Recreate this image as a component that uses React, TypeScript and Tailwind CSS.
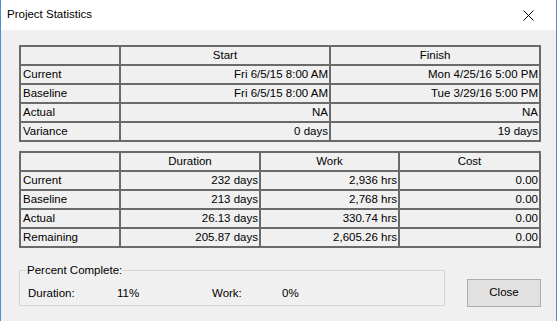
import React from 'react';

type Row = { label: string; values: string[] };

const startFinish: Row[] = [
    { label: 'Current', values: ['Fri 6/5/15 8:00 AM', 'Mon 4/25/16 5:00 PM'] },
    { label: 'Baseline', values: ['Fri 6/5/15 8:00 AM', 'Tue 3/29/16 5:00 PM'] },
    { label: 'Actual', values: ['NA', 'NA'] },
    { label: 'Variance', values: ['0 days', '19 days'] },
];

const totals: Row[] = [
    { label: 'Current', values: ['232 days', '2,936 hrs', '0.00'] },
    { label: 'Baseline', values: ['213 days', '2,768 hrs', '0.00'] },
    { label: 'Actual', values: ['26.13 days', '330.74 hrs', '0.00'] },
    { label: 'Remaining', values: ['205.87 days', '2,605.26 hrs', '0.00'] },
];

const cell = 'bg-[#f0f0f0] h-[17px] leading-[17px] whitespace-nowrap overflow-hidden';

const StatGrid: React.FC<{ headers: string[]; rows: Row[]; colsClass: string }> = ({ headers, rows, colsClass }) => (
    <div className={`grid ${colsClass} gap-[2px] p-[2px] bg-[#6a6a6a] w-[522px]`}>
        <div className={cell}></div>
        {headers.map(h => <div key={h} className={`${cell} text-center`}>{h}</div>)}
        {rows.map(r => (
            <React.Fragment key={r.label}>
                <div className={`${cell} pl-[2px]`}>{r.label}</div>
                {r.values.map((v, i) => <div key={i} className={`${cell} text-right pr-[1px]`}>{v}</div>)}
            </React.Fragment>
        ))}
    </div>
);

export default function App() {
    return (
        <div className="w-[560px] h-[321px] bg-white overflow-hidden text-black" style={{ fontFamily: '"Liberation Sans", Arial, sans-serif' }}>
            <div className="w-[557px] h-[321px] border-l border-r border-[#4a8fd4] flex flex-col">
                <div className="h-[30px] bg-white flex items-center justify-between pl-[6px] pr-[22px] shrink-0">
                    <span className="text-[11.5px]">Project Statistics</span>
                    <svg width="11" height="11" viewBox="0 0 11 11">
                        <path d="M0.5 0.5 L10.5 10.5 M10.5 0.5 L0.5 10.5" stroke="#000" strokeWidth="1" />
                    </svg>
                </div>
                <div className="flex-1 bg-[#f0f0f0] pl-[18px] pt-[15px] text-[11.5px]">
                    <StatGrid headers={['Start', 'Finish']} rows={startFinish} colsClass="grid-cols-[98px_208px_208px]" />
                    <div className="mt-[9px]">
                        <StatGrid headers={['Duration', 'Work', 'Cost']} rows={totals} colsClass="grid-cols-[98px_138px_137px_139px]" />
                    </div>
                    <div className="flex items-start">
                        <div className="relative mt-[22px] w-[426px] h-[36px] border border-[#d5d5d5]">
                            <span className="absolute -top-[8px] left-[7px] bg-[#f0f0f0] pr-[1px] leading-[14px]">Percent Complete:</span>
                            <div className="flex pl-[8px] pt-[15px] leading-[14px]">
                                <span className="w-[89px]">Duration:</span>
                                <span className="w-[95px]">11%</span>
                                <span className="w-[70px]">Work:</span>
                                <span>0%</span>
                            </div>
                        </div>
                        <button className="mt-[31px] ml-[22px] w-[74px] h-[28px] bg-[#e1e1e1] border border-[#adadad] text-[11.5px]">Close</button>
                    </div>
                </div>
            </div>
        </div>
    );
}
